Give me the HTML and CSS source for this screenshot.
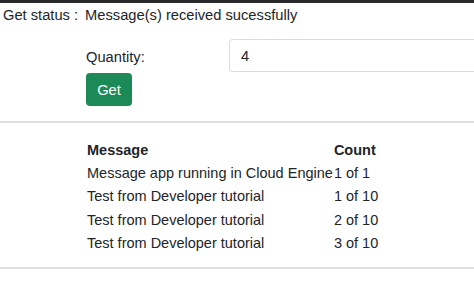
FILE: index.html
```html
<!DOCTYPE html>
<html>
<head>
<meta charset="utf-8">
<link rel="stylesheet" href="styles.css">
</head>
<body>
<div class="topbar"></div>
<div class="status"><span class="status-label">Get status :</span><span class="status-msg">Message(s) received sucessfully</span></div>
<div class="form">
  <div class="form-row">
    <label class="qty-label">Quantity:</label>
    <div class="qty-input">4</div>
  </div>
  <button class="btn-get">Get</button>
</div>
<div class="rule"></div>
<div class="table">
  <div class="cell head">Message</div><div class="cell head">Count</div>
  <div class="cell">Message app running in Cloud Engine</div><div class="cell">1 of 1</div>
  <div class="cell">Test from Developer tutorial</div><div class="cell">1 of 10</div>
  <div class="cell">Test from Developer tutorial</div><div class="cell">2 of 10</div>
  <div class="cell">Test from Developer tutorial</div><div class="cell">3 of 10</div>
</div>
<div class="rule bottom"></div>
</body>
</html>
```

FILE: styles.css
```css
html, body {
  margin: 0;
  padding: 0;
  background: #fff;
}
body {
  font-family: "Liberation Sans", Arial, sans-serif;
  font-size: 14.7px;
  color: #212529;
  width: 474px;
  height: 285px;
  overflow: hidden;
}
.topbar {
  height: 3px;
  background: #2a2a2c;
}
.status {
  display: flex;
  padding-left: 3px;
  height: 24px;
  align-items: center;
}
.status-label {
  margin-right: 7px;
}
.form {
  padding-left: 86px;
}
.form-row {
  display: flex;
  align-items: center;
  margin-top: 12px;
}
.qty-label {
  width: 143px;
  padding-top: 2px;
}
.qty-input {
  flex: 1;
  height: 31px;
  border: 1px solid #dcdcdc;
  border-right: none;
  border-radius: 4px 0 0 4px;
  display: flex;
  align-items: center;
  padding-left: 11px;
}
.btn-get {
  display: block;
  margin-top: 1px;
  width: 46px;
  height: 33px;
  border: none;
  border-radius: 4px;
  background: #1c8a57;
  color: #fff;
  font-family: "Liberation Sans", Arial, sans-serif;
  font-size: 14.7px;
  padding: 0;
}
.rule {
  height: 2px;
  background: #e0e0e0;
  margin-top: 15px;
}
.rule.bottom {
  margin-top: 13px;
}
.table {
  display: grid;
  grid-template-columns: auto auto;
  justify-content: start;
  column-gap: 1px;
  grid-auto-rows: 23.3px;
  padding-left: 87px;
  padding-top: 15px;
  font-size: 14.5px;
}
.cell {
  display: flex;
  align-items: center;
  white-space: nowrap;
}
.head {
  font-weight: bold;
}
```
